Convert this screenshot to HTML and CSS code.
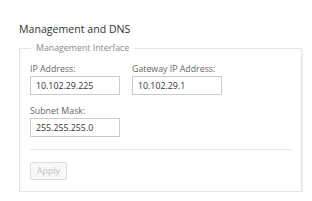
FILE: index.html
```html
<!DOCTYPE html>
<html lang="en">
<head>
  <meta charset="UTF-8">
  <title>Management and DNS</title>
  <link rel="stylesheet" href="styles.css">
</head>
<body>
  <div class="panel">
    <h2 class="titulo">Management and DNS</h2>

    <fieldset class="grupo">
      <legend>Management Interface</legend>

      <div class="fila">
        <div class="campo">
          <label for="ip">IP Address:</label>
          <input id="ip" type="text" value="10.102.29.225">
        </div>
        <div class="campo">
          <label for="gw">Gateway IP Address:</label>
          <input id="gw" type="text" value="10.102.29.1">
        </div>
      </div>

      <div class="fila">
        <div class="campo">
          <label for="mask">Subnet Mask:</label>
          <input id="mask" type="text" value="255.255.255.0">
        </div>
      </div>

      <div class="separador"></div>

      <button class="aplicar" disabled>Apply</button>
    </fieldset>
  </div>
</body>
</html>
```

FILE: styles.css
```css
body {
  margin: 0;
  background: #ffffff;
  font-family: 'Open Sans', sans-serif;
}

.panel {
  padding: 22px 10px 0 19px;
}

.titulo {
  margin: 0;
  font-size: 10.6px;
  line-height: 14px;
  font-weight: normal;
  color: #333333;
}

.grupo {
  margin: 6px 0 0 0;
  padding: 9px 10px 11px 10px;
  border: 1px solid #e4e4e4;
  box-shadow: 1px 1px 1px rgba(0, 0, 0, 0.05);
}

.grupo legend {
  margin-left: 1px;
  padding: 0 5px;
  font-size: 8.8px;
  line-height: 12px;
  color: #8a8a8a;
}

.fila {
  display: flex;
  gap: 12px;
  margin-bottom: 10px;
}

.fila:last-of-type {
  margin-bottom: 0;
}

.campo {
  display: flex;
  flex-direction: column;
  width: 90px;
}

.campo label {
  font-size: 8.8px;
  line-height: 12px;
  color: #666666;
  margin-bottom: 1px;
  white-space: nowrap;
}

.campo input {
  box-sizing: border-box;
  width: 90px;
  height: 19px;
  margin: 0;
  padding: 0 5px;
  border: 1px solid #cccccc;
  border-radius: 0;
  font-family: 'Open Sans', sans-serif;
  font-size: 8.8px;
  color: #333333;
  outline: none;
}

.separador {
  height: 1px;
  background: #e6e6e6;
  margin: 12px 0 12px 0;
}

.aplicar {
  box-sizing: border-box;
  width: 37px;
  height: 18px;
  padding: 0;
  border: 1px solid #dddddd;
  border-radius: 2px;
  background: #f8f8f8;
  font-family: 'Open Sans', sans-serif;
  font-size: 8.8px;
  color: #c2c2c2;
  display: block;
}
```
